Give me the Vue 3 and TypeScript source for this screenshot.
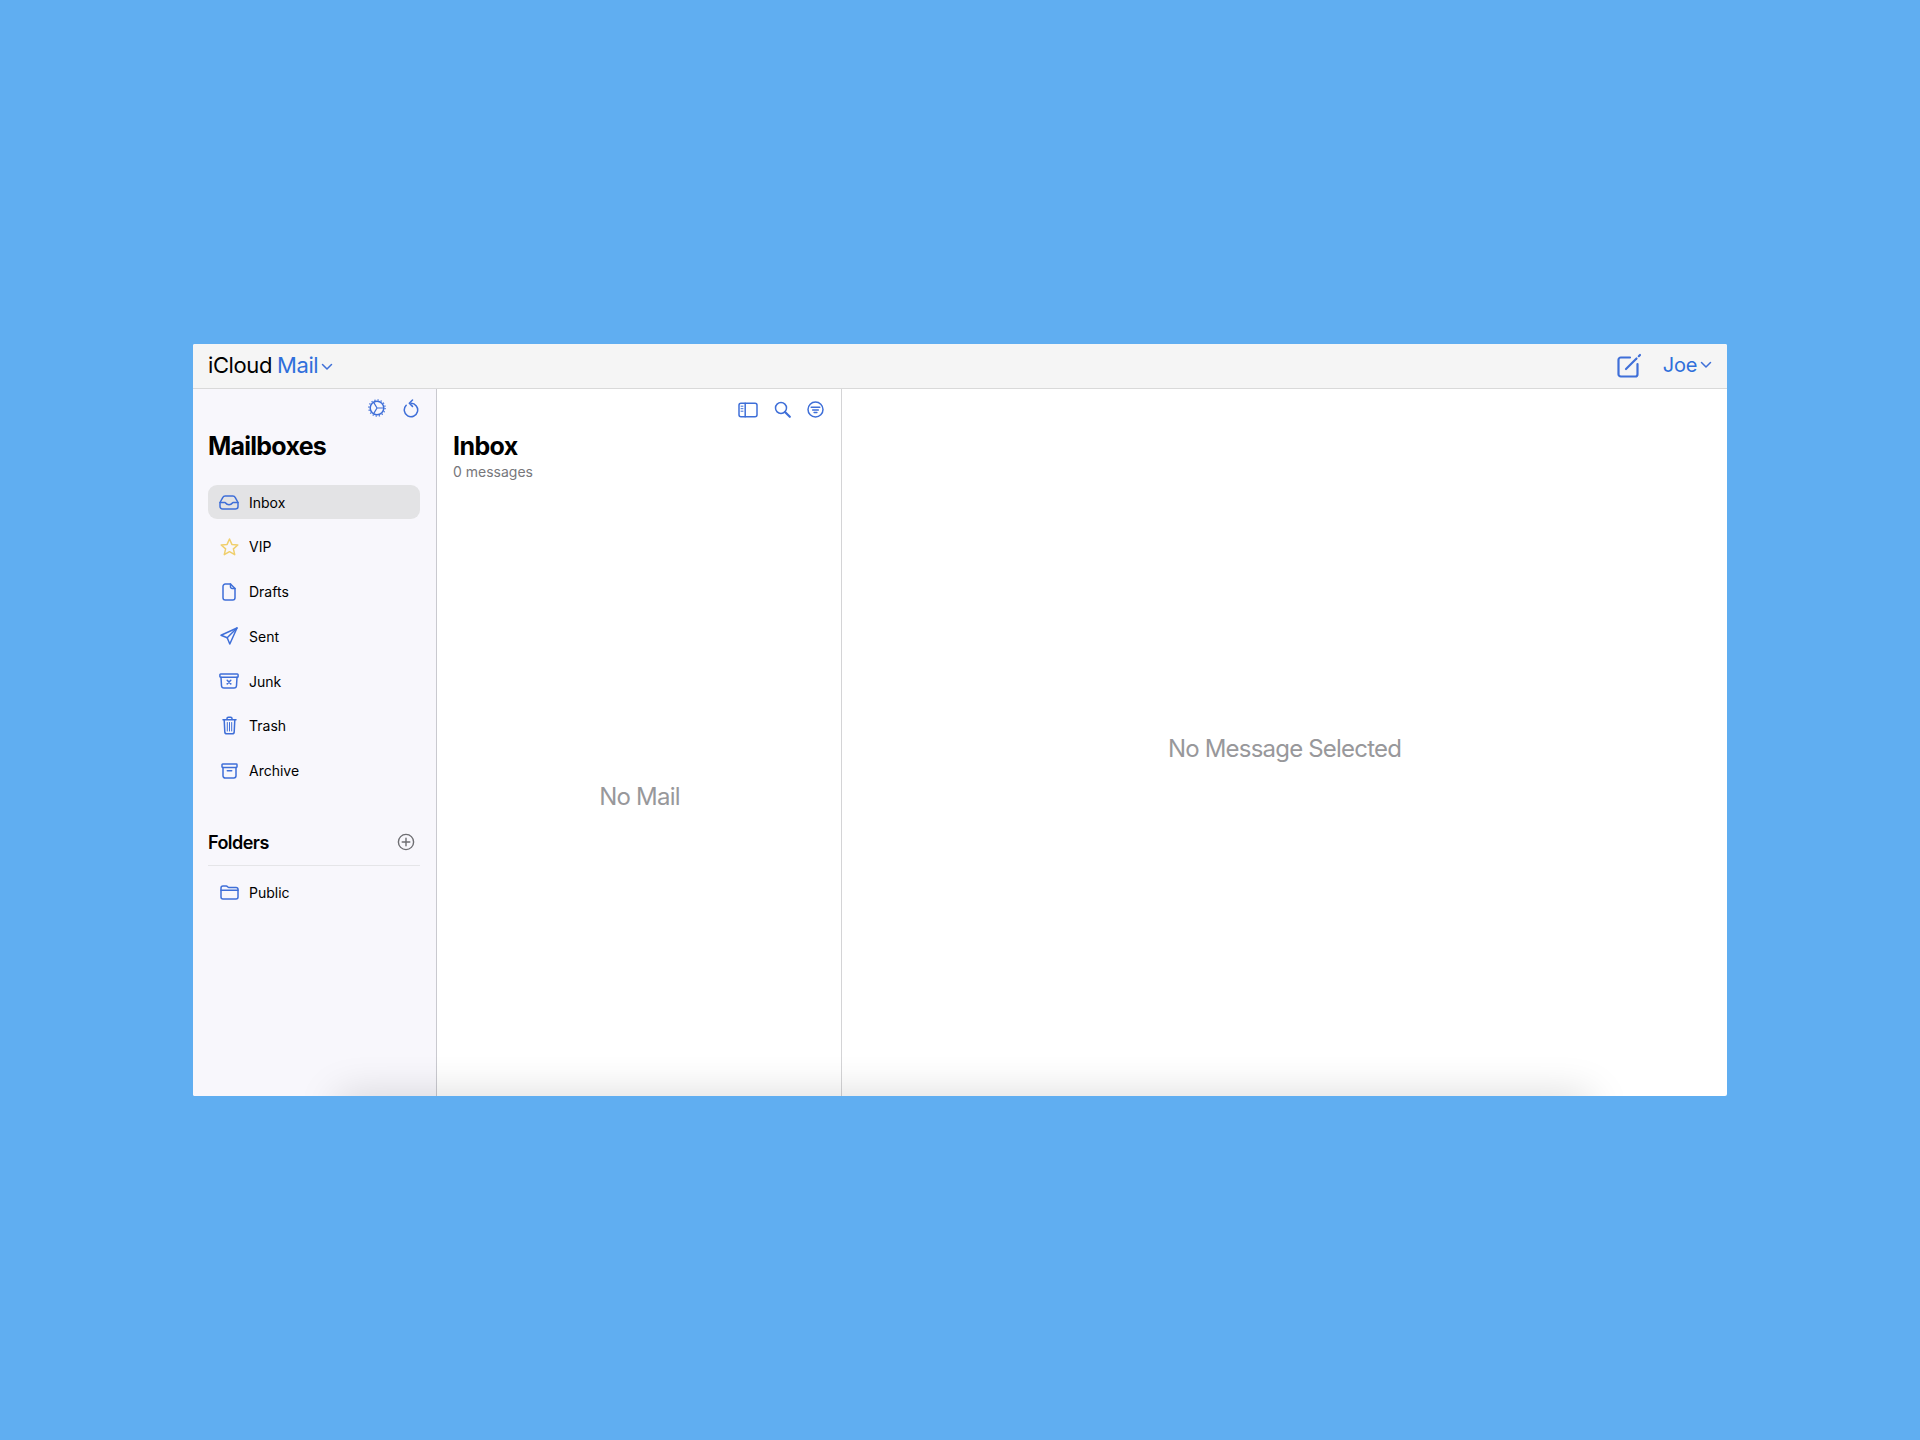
<script setup lang="ts">
interface Box { name: string; icon: string; active?: boolean }
const boxes: Box[] = [
  { name: 'Inbox', icon: 'inbox', active: true },
  { name: 'VIP', icon: 'star' },
  { name: 'Drafts', icon: 'doc' },
  { name: 'Sent', icon: 'sent' },
  { name: 'Junk', icon: 'junk' },
  { name: 'Trash', icon: 'trash' },
  { name: 'Archive', icon: 'archive' },
]
</script>

<template>
  <div class="stage">
    <div class="window">
      <header class="topbar">
        <div class="brand">
          <span>iCloud</span>
          <span class="blue">Mail</span>
          <svg class="chev" width="12" height="8" viewBox="0 0 12 8"><path d="M1.5 1.5 6 6l4.5-4.5" /></svg>
        </div>
        <div class="top-right">
          <svg class="compose" width="26" height="26" viewBox="0 0 26 26">
            <path d="M14 4.5H4.8A2.3 2.3 0 0 0 2.5 6.8v14.4a2.3 2.3 0 0 0 2.3 2.3h14.4a2.3 2.3 0 0 0 2.3-2.3V11" />
            <path d="M10 16 20.5 5.5" />
            <path d="M22.8 3.2 24 2" />
          </svg>
          <div class="user">
            <span>Joe</span>
            <svg class="chev" width="12" height="8" viewBox="0 0 12 8"><path d="M1.5 1.5 6 6l4.5-4.5" /></svg>
          </div>
        </div>
      </header>

      <div class="panes">
        <aside class="sidebar">
          <div class="tools side-tools">
            <svg class="ico gear" width="18" height="18" viewBox="0 0 18 18">
              <circle cx="9" cy="9" r="6.800" stroke-width="1.500" />
              <circle cx="9" cy="9" r="8.100" stroke-dasharray="1.300 1.900" stroke-width="1.300" stroke-linecap="butt" />
              <path stroke-width="1.200" d="M5.700 3.400 9 9l-3.300 5.600M9 9h6.500" />
            </svg>
            <svg class="ico" width="16" height="19" viewBox="0 0 16 19">
              <path d="M3.200 6.300A6.700 6.700 0 1 0 8 4.300" />
              <path d="M9.500 1 6.300 4.200l3.200 3.200" />
            </svg>
          </div>
          <h1 class="title">Mailboxes</h1>
          <ul class="list">
            <li v-for="b in boxes" :key="b.name" class="row" :class="{ active: b.active }">
              <span class="row-icon">
                <svg v-if="b.icon === 'inbox'" class="ico" width="20" height="15" viewBox="0 0 20 15">
                  <path d="M1 7.500 3.700 2.600A2.800 2.800 0 0 1 6.200 1.100h7.600a2.800 2.800 0 0 1 2.500 1.500L19 7.500v3.900a2.500 2.500 0 0 1-2.500 2.500h-13A2.500 2.500 0 0 1 1 11.400Z" />
                  <path d="M1 7.500h5c.7 0 .8 2.300 4 2.300s3.300-2.300 4-2.300h5" />
                </svg>
                <svg v-else-if="b.icon === 'star'" class="ico star" width="19" height="18" viewBox="0 0 19 18">
                  <path d="m9.500 1 2.400 5.400 5.900.6-4.400 3.900 1.300 5.800-5.200-3-5.200 3 1.300-5.800L1.200 7l5.900-.6Z" />
                </svg>
                <svg v-else-if="b.icon === 'doc'" class="ico" width="14" height="18" viewBox="0 0 14 18">
                  <path d="M8.500 1H3.300A2.300 2.300 0 0 0 1 3.300v11.400A2.300 2.300 0 0 0 3.300 17h7.400a2.300 2.300 0 0 0 2.300-2.300V5.500Z" />
                  <path d="M8.500 1v2.800a1.700 1.700 0 0 0 1.700 1.700H13" />
                </svg>
                <svg v-else-if="b.icon === 'sent'" class="ico" width="18" height="18" viewBox="0 0 18 18">
                  <path d="M17 1 1 8.200l6.200 2.600 2.600 6.200Z" />
                  <path d="M17 1 7.200 10.800" />
                </svg>
                <svg v-else-if="b.icon === 'junk'" class="ico" width="20" height="16" viewBox="0 0 20 16">
                  <path d="M1.700 1h16.600c.5 0 .8.300.8.800v1.600c0 .5-.3.800-.8.800H1.700c-.5 0-.8-.3-.8-.8V1.800c0-.5.300-.8.800-.8Z" />
                  <path d="m2 4.200.5 8.500A2.500 2.500 0 0 0 5 15h10a2.500 2.500 0 0 0 2.500-2.300l.5-8.500" />
                  <path d="m8.200 7.300 3.600 3.600m0-3.600-3.600 3.600" />
                </svg>
                <svg v-else-if="b.icon === 'trash'" class="ico" width="15" height="19" viewBox="0 0 15 19">
                  <path d="M1 3.700h13M5 3.700V2.500c0-.8.500-1.300 1.300-1.300h2.400c.8 0 1.300.5 1.300 1.300v1.200" />
                  <path d="m2.200 3.700.6 12.200a2 2 0 0 0 2 1.900h5.400a2 2 0 0 0 2-1.900l.6-12.200" />
                  <path class="thin" d="M5.300 6.500v8.500M7.500 6.500v8.500M9.700 6.500v8.500" />
                </svg>
                <svg v-else-if="b.icon === 'archive'" class="ico" width="17" height="16" viewBox="0 0 17 16">
                  <path d="M1.700 1h13.600c.4 0 .7.300.7.700v2.100c0 .4-.3.700-.7.700H1.700c-.4 0-.7-.3-.7-.7V1.700c0-.4.300-.7.700-.7Z" />
                  <path d="M2 4.500v8.300A2.200 2.200 0 0 0 4.200 15h8.600a2.200 2.200 0 0 0 2.200-2.200V4.500" />
                  <path d="M6.300 7.800h4.400" />
                </svg>
              </span>
              <span>{{ b.name }}</span>
            </li>
          </ul>
          <div class="folders-head">
            <span>Folders</span>
            <svg class="plus" width="18" height="18" viewBox="0 0 18 18">
              <circle cx="9" cy="9" r="7.600" />
              <path d="M9 5.200v7.600M5.200 9h7.600" />
            </svg>
          </div>
          <div class="row folder">
            <span class="row-icon">
              <svg class="ico" width="19" height="15" viewBox="0 0 19 15">
                <path d="M1 3A2 2 0 0 1 3 1h3.300c1.200 0 1.400 1.500 2.600 1.500H16a2 2 0 0 1 2 2V12a2 2 0 0 1-2 2H3a2 2 0 0 1-2-2Z" />
                <path d="M1 5.200h17" />
              </svg>
            </span>
            <span>Public</span>
          </div>
        </aside>

        <section class="middle">
          <div class="tools mid-tools">
            <svg class="ico" width="20" height="16" viewBox="0 0 20 16">
              <rect x="1" y="1.200" width="18" height="13.600" rx="2" />
              <path d="M7.200 1.200v13.600" />
              <path class="thin" d="M3 4.200h2M3 6.700h2M3 9.200h2" />
            </svg>
            <svg class="ico" width="17" height="17" viewBox="0 0 17 17">
              <circle cx="7" cy="7" r="5.500" />
              <path class="heavy" d="m11 11 4.800 4.800" />
            </svg>
            <svg class="ico" width="17" height="17" viewBox="0 0 17 17">
              <circle cx="8.500" cy="8.500" r="7.500" />
              <path d="M4.200 6.300h8.600M5.700 8.900h5.600M7.100 11.500h2.800" />
            </svg>
          </div>
          <h2 class="title mid-title">Inbox</h2>
          <div class="count">0 messages</div>
          <div class="empty no-mail">No Mail</div>
        </section>

        <main class="detail">
          <div class="empty">No Message Selected</div>
        </main>
      </div>
      <div class="edge-shadow" aria-hidden="true"></div>
    </div>
  </div>
</template>

<style>
html, body { margin: 0; background: #60aef1; }
</style>

<style scoped>
.stage {
  min-height: 1440px;
  display: flex;
  align-items: center;
  justify-content: center;
  background: #60aef1;
  font-family: Inter, "Liberation Sans", sans-serif;
  color: #000;
}
.window {
  position: relative;
  width: 1534px;
  height: 752px;
  background: #fff;
  border-radius: 2px;
  display: flex;
  flex-direction: column;
  overflow: hidden;
}
.topbar {
  height: 45px;
  flex: none;
  box-sizing: border-box;
  display: flex;
  align-items: center;
  justify-content: space-between;
  padding: 0 15px;
  background: #f5f5f5;
  border-bottom: 1px solid #d9d9d9;
  font-size: 22px;
  letter-spacing: -0.4px;
}
.brand, .user, .top-right { display: flex; align-items: center; }
.brand span:first-child { margin-right: 5px; }
.blue, .user { color: #2f6fdb; }
.brand { margin-top: -3px; }
.brand .chev { margin-left: 3px; margin-top: 4px; }
.user { margin-top: -2px; }
.user .chev { margin-left: 3px; }
.chev { fill: none; stroke: #3f70d8; stroke-width: 1.500; stroke-linecap: round; stroke-linejoin: round; }
.compose { fill: none; stroke: #3f6fd8; stroke-width: 2.200; stroke-linecap: round; margin-right: 21px; margin-top: -1px; }
.user { font-size: 20px; letter-spacing: -0.3px; }
.panes { flex: 1; display: flex; min-height: 0; }
.sidebar {
  width: 244px;
  flex: none;
  box-sizing: border-box;
  padding: 0 15px;
  background: #f8f7fc;
  border-right: 1px solid #c9c9cf;
}
.tools { display: flex; align-items: center; justify-content: flex-end; }
.side-tools { gap: 17px; height: 38px; margin-right: 2px; }
.ico { fill: none; stroke: #3f6fd8; stroke-width: 1.500; stroke-linecap: round; stroke-linejoin: round; display: block; }
.ico .thin { stroke-width: 1; }
.ico .heavy { stroke-width: 2.200; }
.ico.star { stroke: #f0cf6c; }
.title { margin: 0; font-size: 25px; font-weight: 700; letter-spacing: -0.75px; line-height: 30px; }
.sidebar .title { margin-top: 4px; }
.list { list-style: none; margin: 24px 0 0; padding: 0; display: flex; flex-direction: column; gap: 10.8px; width: 212px; }
.row {
  height: 34px;
  display: flex;
  align-items: center;
  gap: 9px;
  padding-left: 10px;
  border-radius: 9px;
  font-size: 14px;
}
.row.active { background: #e3e3e5; }
.row-icon { width: 22px; display: flex; justify-content: center; }
.folders-head {
  display: flex;
  align-items: center;
  justify-content: space-between;
  width: 212px;
  box-sizing: border-box;
  margin-top: 32px;
  height: 46px;
  padding: 0 5px 0 0;
  border-bottom: 1px solid #e5e5e8;
  font-size: 18px;
  font-weight: 600;
  letter-spacing: -0.55px;
}
.plus { fill: none; stroke: #6e6e72; stroke-width: 1.400; stroke-linecap: round; }
.folder { margin-top: 10px; }
.middle {
  width: 405px;
  flex: none;
  box-sizing: border-box;
  padding: 0 15px 0 16px;
  border-right: 1px solid #d4d4d6;
  display: flex;
  flex-direction: column;
}
.mid-tools { gap: 16px; height: 41px; margin-right: 2px; }
.mid-title { margin-top: 1px; line-height: 30px; letter-spacing: -0.6px; }
.count { font-size: 14px; color: #77777b; line-height: 22px; }
.empty { font-size: 24px; color: #98989b; letter-spacing: -0.8px; }
.no-mail { flex: 1; display: flex; align-items: center; justify-content: center; margin-top: 14px; }
.detail { flex: 1; display: flex; align-items: center; justify-content: center; padding-top: 12px; }
.edge-shadow {
  position: absolute;
  left: 145px;
  right: 137px;
  bottom: -30px;
  height: 30px;
  box-shadow: 0 0 40px rgba(0, 0, 0, 0.17);
  pointer-events: none;
}
</style>
